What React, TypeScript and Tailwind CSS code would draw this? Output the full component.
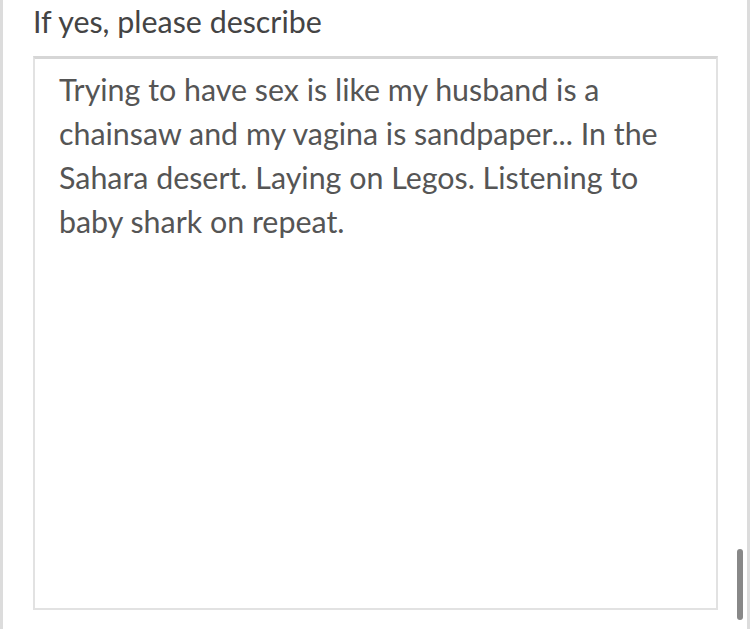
import React from "react";

const lines = [
  "Trying to have sex is like my husband is a",
  "chainsaw and my vagina is sandpaper... In the",
  "Sahara desert. Laying on Legos. Listening to",
  "baby shark on repeat.",
];

export default function App() {
  return (
    <div className="relative w-[750px] h-[629px] bg-white overflow-hidden" style={{ fontFamily: "Lato, 'Open Sans', sans-serif" }}>
      <div className="absolute left-0 top-0 h-full w-[3px] bg-[#dcdcdc]" />
      <div className="absolute right-0 top-0 h-full w-[3px] bg-[#dcdcdc]" />
      <div className="absolute left-[737px] top-[549px] w-[6px] h-[71px] rounded-full bg-[#888]" />
      <div className="pl-[33px] pt-[1px] w-[718px]">
        <div className="text-[30.4px] leading-[40px] text-[#444]">If yes, please describe</div>
        <div className="mt-[15px] h-[554px] border-2 border-[#e2e2e2] border-t-[3px] border-t-[#d6d6d6] pl-[24px] pt-[8px]">
          {lines.map((l, i) => (
            <div key={i} className="text-[30.4px] leading-[44px] text-[#555] whitespace-nowrap">{l}</div>
          ))}
        </div>
      </div>
    </div>
  );
}
